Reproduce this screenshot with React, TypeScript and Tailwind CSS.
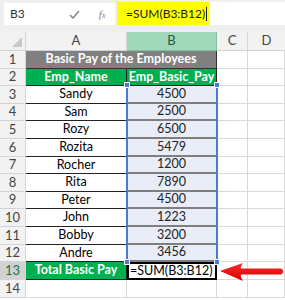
import React from 'react';

const names = ['Sandy', 'Sam', 'Rozy', 'Rozita', 'Rocher', 'Rita', 'Peter', 'John', 'Bobby', 'Andre'];
const pays = ['4500', '2500', '6500', '5479', '1200', '7890', '4500', '1223', '3200', '3456'];
// row heights for rows 1..14 (screenshot rows are ~17.6px)
const rowH = ['h-[18px]', 'h-[17px]', 'h-[18px]', 'h-[17px]', 'h-[18px]', 'h-[18px]', 'h-[17px]', 'h-[18px]', 'h-[17px]', 'h-[18px]', 'h-[18px]', 'h-[17px]', 'h-[18px]', 'h-[18px]'];

const RowHead = ({ n, active }: { n: number; active?: boolean }) => (
  <div
    className={`${rowH[n - 1]} flex items-center justify-center border-r border-b border-[#d4d4d4] text-[13px] ${
      active ? 'bg-[#d2d2d2] text-[#217346]' : 'bg-[#f2f2f2] text-[#444]'
    }`}
  >
    {n}
  </div>
);

const Empty = ({ h }: { h: string }) => <div className={`${h} border-r border-b border-[#d9d9d9] bg-white`} />;

const App = () => {
  return (
    <div className="w-[285px] h-[300px] overflow-hidden bg-white font-['Lato',sans-serif] relative">
      {/* formula bar */}
      <div className="h-[32px] bg-[#efefef] flex items-start pt-[2px]">
        <div className="ml-[4px] mt-[1px] w-[111px] h-[22px] bg-white flex items-center">
          <span className="ml-[6px] text-[12px] text-[#333]">B3</span>
          <svg className="ml-[44px]" width="11" height="9" viewBox="0 0 11 9">
            <path d="M1 5 L4 8 L10 1" fill="none" stroke="#8a8a8a" strokeWidth="1.6" />
          </svg>
          <span className="ml-[19px] text-[11px] italic text-[#8a8a8a] font-['Liberation_Serif',serif]">
            f<span className="text-[9px]">x</span>
          </span>
        </div>
        <div className="ml-[2px] flex-1 h-[23px] bg-white flex">
          <div className="w-[93px] h-full bg-[#ffff00] flex items-center pl-[9px] text-[12px] text-[#222]">
            =SUM(B3:B12)<span className="ml-[1px] w-px h-[14px] bg-[#222]" />
          </div>
        </div>
      </div>

      {/* sheet */}
      <div className="grid grid-cols-[26px_101px_90px_31px_1fr] text-[12.5px]">
        {/* column headers */}
        <div className="h-[19px] bg-[#f2f2f2] border-r border-b border-[#d4d4d4] relative">
          <svg className="absolute right-[3px] bottom-[3px]" width="10" height="10" viewBox="0 0 10 10">
            <path d="M10 0 L10 10 L0 10 Z" fill="#c8c8c8" />
          </svg>
        </div>
        <div className="h-[19px] bg-[#f2f2f2] border-r border-b border-[#d4d4d4] flex items-center justify-center text-[13px] text-[#444]">A</div>
        <div className="h-[19px] bg-[#a0d8b9] border-r border-b border-[#86bfa0] flex items-center justify-center text-[13px] text-[#2b5a3f]">B</div>
        <div className="h-[19px] bg-[#f2f2f2] border-r border-b border-[#d4d4d4] flex items-center justify-center text-[13px] text-[#444]">C</div>
        <div className="h-[19px] bg-[#f2f2f2] border-b border-[#d4d4d4] flex items-center justify-center text-[13px] text-[#444]">D</div>

        {/* row 1 */}
        <RowHead n={1} />
        <div className={`${rowH[0]} col-span-2 bg-[#808080] border-r border-b border-[#333] flex items-center justify-center font-bold text-white`}>
          Basic Pay of the Employees
        </div>
        <Empty h={rowH[0]} />
        <Empty h={rowH[0]} />

        {/* row 2 */}
        <RowHead n={2} />
        <div className={`${rowH[1]} bg-[#00b050] border-r border-b border-[#222] flex items-center justify-center font-bold text-white`}>Emp_Name</div>
        <div className={`${rowH[1]} bg-[#00b050] border-r border-b border-[#222] flex items-center justify-center font-bold text-white`}>Emp_Basic_Pay</div>
        <Empty h={rowH[1]} />
        <Empty h={rowH[1]} />

        {names.map((name, i) => (
          <React.Fragment key={name}>
            <RowHead n={i + 3} />
            <div className={`${rowH[i + 2]} bg-white border-r border-b border-[#222] flex items-center justify-center text-black`}>{name}</div>
            <div className={`${rowH[i + 2]} bg-[#e8edf7] border-r border-b-2 border-[#7f7f7f] flex items-center justify-center text-[#222]`}>{pays[i]}</div>
            <Empty h={rowH[i + 2]} />
            <Empty h={rowH[i + 2]} />
          </React.Fragment>
        ))}

        {/* row 13 */}
        <RowHead n={13} active />
        <div className={`${rowH[12]} bg-[#00b050] border-r border-b border-[#222] flex items-center justify-center font-bold text-white`}>Total Basic Pay</div>
        <div className={`${rowH[12]} bg-white border-2 border-black flex items-center pl-[1px] text-black`}>=SUM(B3:B12)</div>
        <Empty h={rowH[12]} />
        <Empty h={rowH[12]} />

        {/* row 14 */}
        <RowHead n={14} />
        <Empty h={rowH[13]} />
        <Empty h={rowH[13]} />
        <Empty h={rowH[13]} />
        <Empty h={rowH[13]} />
      </div>

      {/* selection of B3:B12 */}
      <div className="absolute left-[126px] top-[85px] w-[92px] h-[177px] border-x-2 border-[#4a7bd0] pointer-events-none">
        <span className="absolute -left-[4px] -top-[3px] w-[6px] h-[6px] bg-[#4a7bd0] border border-white" />
        <span className="absolute -right-[4px] -top-[3px] w-[6px] h-[6px] bg-[#4a7bd0] border border-white" />
        <span className="absolute -left-[4px] -bottom-[3px] w-[6px] h-[6px] bg-[#4a7bd0] border border-white" />
        <span className="absolute -right-[4px] -bottom-[3px] w-[6px] h-[6px] bg-[#4a7bd0] border border-white" />
      </div>

      {/* red arrow */}
      <svg className="absolute left-[219px] top-[262px]" width="66" height="21" viewBox="0 0 66 21">
        <defs>
          <linearGradient id="ar" x1="0" y1="0" x2="0" y2="1">
            <stop offset="0" stopColor="#ff2a2a" />
            <stop offset="1" stopColor="#d40000" />
          </linearGradient>
        </defs>
        <path d="M1 9 L24 1 Q21 5 22 6.5 L61 6.5 A3 3 0 0 1 61 12.5 L22 12.5 Q21 14 24 19 Z" fill="url(#ar)" />
      </svg>
    </div>
  );
};

export default App;
